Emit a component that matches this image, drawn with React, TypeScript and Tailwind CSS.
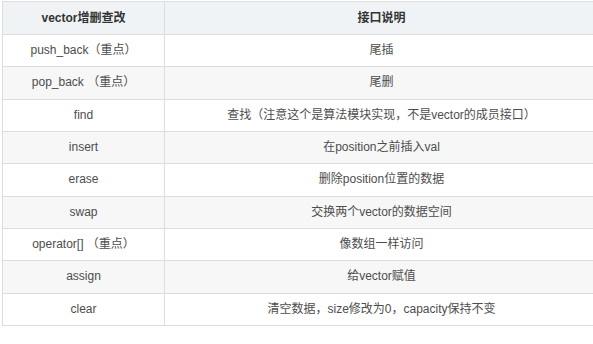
const rows: [string, string][] = [
    ["push_back（重点）", "尾插"],
    ["pop_back （重点）", "尾删"],
    ["find", "查找（注意这个是算法模块实现，不是vector的成员接口）"],
    ["insert", "在position之前插入val"],
    ["erase", "删除position位置的数据"],
    ["swap", "交换两个vector的数据空间"],
    ["operator[] （重点）", "像数组一样访问"],
    ["assign", "给vector赋值"],
    ["clear", "清空数据，size修改为0，capacity保持不变"],
]

export default function App() {
    return (
        <div className="h-[344px] w-[593px] overflow-hidden bg-white pl-[2px] pt-[1px]"
             style={{fontFamily: '"Liberation Sans", Arial, "Noto Sans CJK SC", sans-serif'}}>
            <table className="w-[597px] border-collapse text-[12px] text-[#4d4d4d]">
                <thead>
                <tr className="bg-[#eff3f5]">
                    <th className="w-[162px] border border-[#dddddd] py-[5px] text-center font-bold leading-[22px] text-[#333]">vector增删查改</th>
                    <th className="border border-[#dddddd] py-[5px] text-center font-bold leading-[22px] text-[#333]">接口说明</th>
                </tr>
                </thead>
                <tbody>
                {rows.map(([name, desc], i) => (
                    <tr key={name} className={i % 2 === 1 ? "bg-[#f7f7f7]" : "bg-white"}>
                        <td className="border border-[#dddddd] py-[5px] text-center leading-[21.33px]">{name}</td>
                        <td className="border border-[#dddddd] py-[5px] text-center leading-[21.33px]">{desc}</td>
                    </tr>
                ))}
                </tbody>
            </table>
        </div>
    )
}
